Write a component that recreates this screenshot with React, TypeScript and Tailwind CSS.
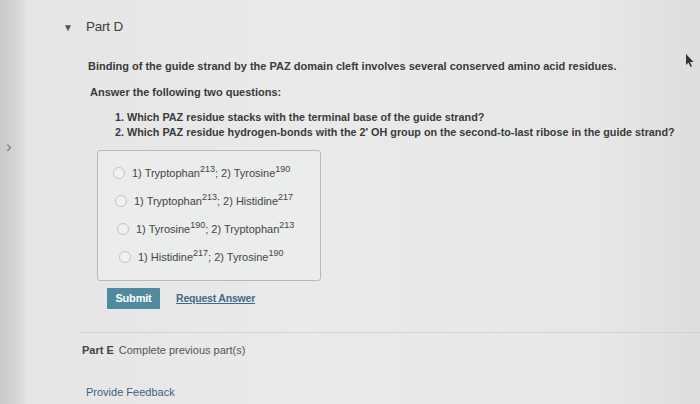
import React from "react";

const options: [string, string, string, string][] = [
  ["Tryptophan", "213", "Tyrosine", "190"],
  ["Tryptophan", "213", "Histidine", "217"],
  ["Tyrosine", "190", "Tryptophan", "213"],
  ["Histidine", "217", "Tyrosine", "190"],
];

export default function App() {
  return (
    <div
      className="relative w-[700px] h-[404px] overflow-hidden flex bg-[linear-gradient(to_right,#c8c9c8_0px,#d3d4d3_16px,#e4e5e4_28px,#e9eae9_300px,#e6e7e6_600px,#dcdddc_700px)] text-[#3b3b3b]"
      style={{ fontFamily: '"Liberation Sans", Arial, sans-serif' }}
    >
      {/* left rail */}
      <div className="w-[22px] shrink-0 flex flex-col">
        <div className="h-[138px]" />
        <div className="text-[17px] text-[#7c7c7c] pl-[6px] leading-none">›</div>
      </div>

      <div className="flex-1 flex flex-col">
        {/* header */}
        <div className="h-[48px] flex items-center pl-[41px] pt-[6px]">
          <span className="text-[10px] text-[#555] mr-[13px]">▼</span>
          <span className="text-[13.5px] text-[#404040] tracking-[-0.2px]">Part D</span>
        </div>

        <div className="pl-[66px] mt-[10px] text-[11px] font-bold leading-[16px] text-[#3a3a3a]">
          Binding of the guide strand by the PAZ domain cleft involves several conserved amino acid residues.
        </div>
        <div className="pl-[68px] mt-[10px] text-[11px] font-bold leading-[16px] text-[#3a3a3a]">
          Answer the following two questions:
        </div>
        <div className="pl-[93px] mt-[10px] text-[10.8px] font-bold leading-[15px] text-[#3a3a3a]">
          <div>1. Which PAZ residue stacks with the terminal base of the guide strand?</div>
          <div>2. Which PAZ residue hydrogen-bonds with the 2' OH group on the second-to-last ribose in the guide strand?</div>
        </div>

        {/* answer box */}
        <div className="ml-[75px] mt-[10px] w-[224px] h-[131px] border border-[#b9b9b9] rounded-[3px] bg-[#ebecec] flex flex-col pt-[14px] pl-[15px] gap-[12px]">
          {options.map((o, i) => (
            <div key={i} className="flex items-center h-[16px]" style={{ paddingLeft: i * 2 }}>
              <span className="w-[12px] h-[12px] rounded-full border border-[#c4c4c4] bg-[#f1f1f1] mr-[7px]" />
              <span className="text-[11px] text-[#444]">
                1) {o[0]}
                <sup className="text-[9px]">{o[1]}</sup>; 2) {o[2]}
                <sup className="text-[9px]">{o[3]}</sup>
              </span>
            </div>
          ))}
        </div>

        <div className="ml-[85px] mt-[7px] flex items-center">
          <button className="w-[53px] h-[21px] bg-[#4f8a9d] text-white text-[11px] font-bold rounded-[1px] tracking-[-0.2px]">
            Submit
          </button>
          <span className="ml-[16px] text-[10.5px] font-bold text-[#3f6a8c] underline tracking-[-0.2px]">
            Request Answer
          </span>
        </div>

        <div className="ml-[58px] mt-[23px] h-px bg-[#d2d3d2]" />

        <div className="pl-[60px] mt-[9px] text-[11px] leading-[16px]">
          <span className="font-bold text-[#444]">Part E</span>
          <span className="ml-[5px] text-[#555]">Complete previous part(s)</span>
        </div>

        <div className="pl-[64px] mt-[26px] text-[11px] text-[#3f5f80]">Provide Feedback</div>
      </div>

      {/* mouse cursor */}
      <svg className="absolute left-[685px] top-[53px]" width="10" height="15" viewBox="0 0 10 15">
        <path d="M1 1 L1 12 L3.5 9.5 L5.5 14 L7 13.3 L5 9 L8.5 9 Z" fill="#333" />
      </svg>
    </div>
  );
}
